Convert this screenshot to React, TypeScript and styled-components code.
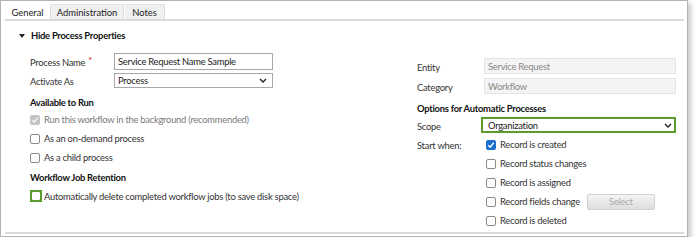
import React from 'react'
import styled, { createGlobalStyle } from 'styled-components'

const Global = createGlobalStyle`
  html, body {
    margin: 0;
    padding: 0;
    background: #fff;
  }
  body {
    font-family: Lato, "Open Sans", sans-serif;
    font-size: 9.4px;
    letter-spacing: -0.25px;
    color: #333;
  }
`

const Chevron = () => (
  <svg width="8" height="5" viewBox="0 0 8 5">
    <path d="M1 1 L4 4 L7 1" fill="none" stroke="#222" strokeWidth="1.4" />
  </svg>
)

const Tick = ({ color }: { color: string }) => (
  <svg width="8" height="8" viewBox="0 0 8 8">
    <path d="M1.2 4.2 L3.2 6.2 L6.8 1.6" fill="none" stroke={color} strokeWidth="1.5" />
  </svg>
)

interface BoxProps {
  checked?: boolean,
  disabled?: boolean,
  highlight?: boolean
}

const CheckBox = ({ checked, disabled, highlight }: BoxProps) => {
  if (highlight) {
    return <S.HighlightBox><S.InnerBox /></S.HighlightBox>
  }
  return (<S.Box checked={checked} disabled={disabled}>
    {
      checked
        ? <Tick color={disabled ? '#f4f4f4' : '#fff'} />
        : null
    }
  </S.Box>)
}

const tabs = [
  { text: 'General', width: 46, active: true },
  { text: 'Administration', width: 73 },
  { text: 'Notes', width: 40 }
]

const leftChecks = [
  { text: 'Run this workflow in the background (recommended)', checked: true, disabled: true },
  { text: 'As an on-demand process' },
  { text: 'As a child process' }
]

const startWhen = [
  { text: 'Record is created', checked: true },
  { text: 'Record status changes' },
  { text: 'Record is assigned' },
  { text: 'Record fields change', button: true },
  { text: 'Record is deleted' }
]

export default function App() {
  return (<>
    <Global />
    <S.Frame>
      <S.Tabs>
        {
          tabs.map(t => (
            <S.Tab key={t.text} width={t.width} active={t.active}>{t.text}</S.Tab>
          ))
        }
      </S.Tabs>
      <S.Panel>
        <S.SectionHeader>
          <S.Triangle />
          Hide Process Properties
        </S.SectionHeader>
        <S.Columns>
          <S.LeftCol>
            <S.FieldRow height={17}>
              <S.Label width={84}>Process Name<S.Req>*</S.Req></S.Label>
              <S.Input width={159}>Service Request Name Sample</S.Input>
            </S.FieldRow>
            <S.FieldRow height={15} top={3}>
              <S.Label width={84}>Activate As</S.Label>
              <S.Select width={159}>Process<Chevron /></S.Select>
            </S.FieldRow>
            <S.Heading top={8}>Available to Run</S.Heading>
            {
              leftChecks.map(c => (
                <S.CheckRow key={c.text} height={19}>
                  <CheckBox checked={c.checked} disabled={c.disabled} />
                  <S.CheckText disabled={c.disabled}>{c.text}</S.CheckText>
                </S.CheckRow>
              ))
            }
            <S.Heading top={4}>Workflow Job Retention</S.Heading>
            <S.CheckRow height={18} top={2} tight>
              <CheckBox highlight />
              <S.CheckText>Automatically delete completed workflow jobs (to save disk space)</S.CheckText>
            </S.CheckRow>
          </S.LeftCol>
          <S.RightCol>
            <S.FieldRow height={16}>
              <S.Label width={67} low>Entity</S.Label>
              <S.Input width={192} readOnly>Service Request</S.Input>
            </S.FieldRow>
            <S.FieldRow height={16} top={4}>
              <S.Label width={67} low>Category</S.Label>
              <S.Input width={192} readOnly>Workflow</S.Input>
            </S.FieldRow>
            <S.Heading top={8}>Options for Automatic Processes</S.Heading>
            <S.FieldRow height={16} top={1}>
              <S.Label width={64} low>Scope</S.Label>
              <S.ScopeSelect>Organization<Chevron /></S.ScopeSelect>
            </S.FieldRow>
            <S.StartWhen>
              <S.StartLabel>Start when:</S.StartLabel>
              <S.StartList>
                {
                  startWhen.map(c => (
                    <S.CheckRow key={c.text} height={19}>
                      <CheckBox checked={c.checked} />
                      <S.CheckText>{c.text}</S.CheckText>
                      {
                        c.button
                          ? <S.SelectButton>Select</S.SelectButton>
                          : null
                      }
                    </S.CheckRow>
                  ))
                }
              </S.StartList>
            </S.StartWhen>
          </S.RightCol>
        </S.Columns>
      </S.Panel>
    </S.Frame>
  </>)
}

const S = {
  Frame: styled.div`
    width: 688px;
    height: 237px;
    box-sizing: border-box;
    border: 1px solid #b3b3b3;
    box-shadow: 3px 3px 5px rgba(0, 0, 0, 0.22);
    padding: 3px 3px 2px 4px;
    display: flex;
    flex-direction: column;
    background: #fff;
  `,
  Tabs: styled.div`
    display: flex;
    height: 15px;
  `,
  Tab: styled.div<{ width: number, active?: boolean }>`
    width: ${p => p.width}px;
    height: 15px;
    box-sizing: border-box;
    display: flex;
    align-items: center;
    justify-content: center;
    letter-spacing: 0;
    color: #222;
    background: ${p => p.active ? '#fff' : '#f0f0f0'};
    border-right: 1px solid #dcdcdc;
    border-top: 1px solid ${p => p.active ? '#fff' : '#e4e4e4'};
    margin-right: ${p => p.active ? '0' : '1px'};
  `,
  Panel: styled.div`
    flex: 1;
    border-top: 2px solid #d9d9de;
    border-bottom: 2px solid #d9d9de;
    padding: 7px 0 0 0;
    display: flex;
    flex-direction: column;
  `,
  SectionHeader: styled.div`
    height: 14px;
    display: flex;
    align-items: center;
    padding-left: 14px;
    font-weight: 700;
    color: #111;
  `,
  Triangle: styled.div`
    width: 0;
    height: 0;
    border-left: 3px solid transparent;
    border-right: 3px solid transparent;
    border-top: 4px solid #222;
    margin: 2px 6px 0 0;
  `,
  Columns: styled.div`
    display: flex;
    padding-left: 25px;
  `,
  LeftCol: styled.div`
    width: 387px;
    padding-top: 11px;
    display: flex;
    flex-direction: column;
  `,
  RightCol: styled.div`
    width: 260px;
    padding-top: 16px;
    display: flex;
    flex-direction: column;
  `,
  FieldRow: styled.div<{ height: number, top?: number }>`
    display: flex;
    align-items: center;
    height: ${p => p.height}px;
    margin-top: ${p => p.top || 0}px;
  `,
  Label: styled.div<{ width: number, low?: boolean }>`
    width: ${p => p.width}px;
    flex: none;
    color: #333;
    padding-top: ${p => p.low ? '3px' : '1px'};
  `,
  Req: styled.span`
    color: #e02020;
    margin-left: 3px;
    position: relative;
    top: -2px;
  `,
  Input: styled.div<{ width: number, readOnly?: boolean }>`
    width: ${p => p.width}px;
    height: 100%;
    box-sizing: border-box;
    border: 1px solid ${p => p.readOnly ? '#e4e4e4' : '#a8a8a8'};
    background: ${p => p.readOnly ? '#f4f4f4' : '#fff'};
    color: ${p => p.readOnly ? '#888' : '#222'};
    display: flex;
    align-items: center;
    padding-left: 3px;
  `,
  Select: styled.div<{ width: number }>`
    width: ${p => p.width}px;
    height: 100%;
    box-sizing: border-box;
    border: 1px solid #a8a8a8;
    background: #fff;
    color: #222;
    display: flex;
    align-items: center;
    justify-content: space-between;
    padding: 0 5px 0 3px;
  `,
  ScopeSelect: styled.div`
    width: 195px;
    height: 100%;
    box-sizing: border-box;
    border: 2px solid #5d9b2f;
    background: #fff;
    color: #222;
    display: flex;
    align-items: center;
    justify-content: space-between;
    padding: 0 2px 0 5px;
  `,
  Heading: styled.div<{ top?: number }>`
    height: 14px;
    line-height: 14px;
    margin-top: ${p => p.top || 0}px;
    font-weight: 700;
    color: #111;
  `,
  CheckRow: styled.div<{ height: number, top?: number, tight?: boolean }>`
    display: flex;
    align-items: center;
    height: ${p => p.height}px;
    margin-top: ${p => p.top || 0}px;
    gap: ${p => p.tight ? '2px' : '4px'};
  `,
  Box: styled.div<{ checked?: boolean, disabled?: boolean }>`
    width: 10px;
    height: 10px;
    box-sizing: border-box;
    border-radius: 2px;
    flex: none;
    display: flex;
    align-items: center;
    justify-content: center;
    border: 1px solid ${p => p.checked ? (p.disabled ? '#c4c4c4' : '#1a6fd0') : '#8a8a8a'};
    background: ${p => p.checked ? (p.disabled ? '#c4c4c4' : '#1a6fd0') : '#fff'};
  `,
  HighlightBox: styled.div`
    width: 12px;
    height: 12px;
    box-sizing: border-box;
    flex: none;
    background: #5d9b2f;
    padding: 2px;
  `,
  InnerBox: styled.div`
    width: 100%;
    height: 100%;
    background: #fff;
    border-radius: 1px;
  `,
  CheckText: styled.div<{ disabled?: boolean }>`
    color: ${p => p.disabled ? '#7a7a7a' : '#333'};
    white-space: nowrap;
  `,
  StartWhen: styled.div`
    display: flex;
    margin-top: 2px;
  `,
  StartLabel: styled.div`
    width: 69px;
    flex: none;
    height: 19px;
    line-height: 22px;
  `,
  StartList: styled.div`
    display: flex;
    flex-direction: column;
  `,
  SelectButton: styled.div`
    width: 68px;
    height: 16px;
    box-sizing: border-box;
    margin-left: 3px;
    border: 1px solid #d0d0d0;
    border-radius: 2px;
    background: linear-gradient(#f4f4f4, #dedede);
    color: #a8a8a8;
    display: flex;
    align-items: center;
    justify-content: center;
  `
}
